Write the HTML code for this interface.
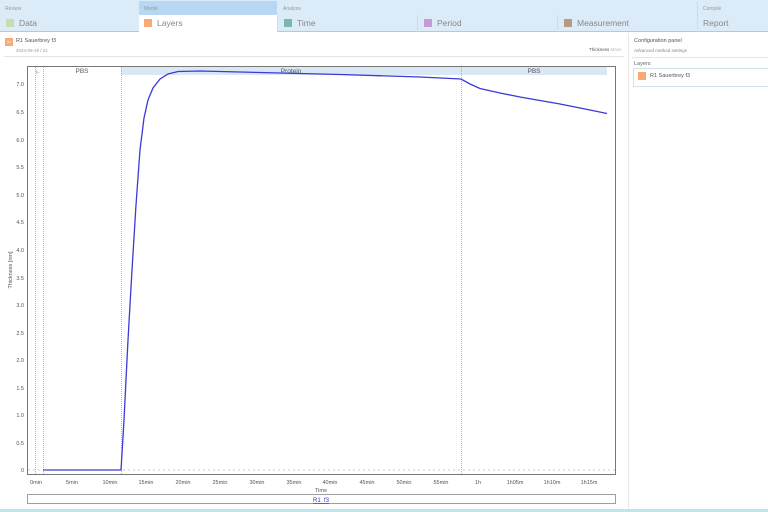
<!DOCTYPE html>
<html><head><meta charset="utf-8"><style>
*{margin:0;padding:0;box-sizing:border-box}
body{width:768px;height:512px;overflow:hidden;background:#fff;font-family:"Liberation Sans",sans-serif;position:relative;color:#444}
.a{position:absolute}
.sm{font-size:5px;color:#999}
.tab{font-size:8.5px;color:#888}
.sq{display:inline-block;width:8px;height:8px;vertical-align:-1px;margin-right:5px}
</style></head><body>
<div class="a" style="left:0;top:0;width:768px;height:32px;background:#dcebf8;border-bottom:1px solid #9fd3e0"></div>
<div class="a" style="left:139px;top:1px;width:138px;height:14px;background:#b7d7f3"></div>
<div class="a" style="left:139px;top:15px;width:138px;height:17px;background:#fff"></div>
<div class="a" style="left:277px;top:15px;width:1px;height:17px;background:#c9dcec"></div>
<div class="a" style="left:697px;top:1px;width:1px;height:31px;background:#c9dcec"></div>
<div class="a" style="left:417px;top:15px;width:1px;height:17px;background:#c9dcec"></div>
<div class="a" style="left:557px;top:15px;width:1px;height:17px;background:#c9dcec"></div>
<div class="a sm" style="left:5px;top:6px">Review</div>
<div class="a sm" style="left:144px;top:6px">Model</div>
<div class="a sm" style="left:283px;top:6px">Analyze</div>
<div class="a sm" style="left:703px;top:6px">Compile</div>
<div class="a tab" style="left:6px;top:18px"><span class="sq" style="background:#c8dcb0"></span>Data</div>
<div class="a tab" style="left:144px;top:18px"><span class="sq" style="background:#f8aa72"></span>Layers</div>
<div class="a tab" style="left:284px;top:18px"><span class="sq" style="background:#7ab8b0"></span>Time</div>
<div class="a tab" style="left:424px;top:18px"><span class="sq" style="background:#c49ad8"></span>Period</div>
<div class="a tab" style="left:564px;top:18px"><span class="sq" style="background:#b89a80"></span>Measurement</div>
<div class="a tab" style="left:703px;top:18px">Report</div>

<div class="a" style="left:5px;top:38px;width:8px;height:8px;background:#f8aa72;font-size:4px;color:#fff;text-align:center;line-height:8px">lu</div>
<div class="a" style="left:16px;top:38px;font-size:5.5px;color:#555">R1 Sauerbrey f3</div>
<div class="a sm" style="left:16px;top:48px;font-size:4.5px">2024-09-19 / 21</div>
<div class="a" style="left:589px;top:47px;font-size:4.5px;color:#555">Thickness <span style="color:#bbb">Mass</span></div>
<div class="a" style="left:4px;top:56px;width:620px;height:1px;background:#e5e5e5"></div>
<div class="a" style="left:628px;top:33px;width:1px;height:479px;background:#e8e8e8"></div>
<div class="a" style="left:634px;top:38px;font-size:5.5px;color:#555">Configuration panel</div>
<div class="a" style="left:634px;top:48px;font-size:4.5px;color:#888">Advanced method settings</div>
<div class="a" style="left:632px;top:57px;width:136px;height:1px;background:#e5e5e5"></div>
<div class="a" style="left:634px;top:61px;font-size:5.5px;color:#666">Layers</div>
<div class="a" style="left:633px;top:68px;width:135px;height:19px;border:1px solid #cfe3ea;border-right:none"></div>
<div class="a" style="left:638px;top:72px;width:8px;height:8px;background:#f8aa72"></div>
<div class="a" style="left:650px;top:73px;font-size:5.5px;color:#555">R1 Sauerbrey f3</div>

<svg class="a" style="left:0;top:0" width="768" height="512" font-family="Liberation Sans,sans-serif">
<rect x="121" y="67" width="340" height="8" fill="#dae8f5"/>
<rect x="461" y="67" width="146" height="8" fill="#dae8f5"/>
<rect x="27.5" y="66.5" width="588" height="408" fill="none" stroke="#777" stroke-width="1"/>
<g stroke="#999" stroke-width="0.7" stroke-dasharray="1,1">
<line x1="35.5" y1="67" x2="35.5" y2="474"/><line x1="43.5" y1="67" x2="43.5" y2="474"/>
<line x1="121.5" y1="67" x2="121.5" y2="474"/><line x1="461.5" y1="67" x2="461.5" y2="474"/>
<line x1="28" y1="470" x2="615" y2="470" stroke="#bbb" stroke-dasharray="2,3"/>
</g>
<g font-size="6.5" fill="#555" text-anchor="middle">
<text x="82" y="73">PBS</text><text x="291" y="73">Protein</text><text x="534" y="73">PBS</text>
<text x="38" y="73" font-size="4">1..</text>
</g>
<g font-size="5.5" fill="#555" text-anchor="end">
<text x="24" y="472">0</text><text x="24" y="445">0.5</text><text x="24" y="417">1.0</text><text x="24" y="390">1.5</text><text x="24" y="362">2.0</text><text x="24" y="335">2.5</text><text x="24" y="307">3.0</text><text x="24" y="280">3.5</text><text x="24" y="252">4.0</text><text x="24" y="224">4.5</text><text x="24" y="197">5.0</text><text x="24" y="169">5.5</text><text x="24" y="142">6.0</text><text x="24" y="114">6.5</text><text x="24" y="86">7.0</text>
</g>
<text x="12" y="270" font-size="5.5" fill="#555" text-anchor="middle" transform="rotate(-90 12 270)">Thickness [nm]</text>
<g font-size="5.5" fill="#555" text-anchor="middle">
<text x="36" y="484">0min</text><text x="72" y="484">5min</text><text x="110" y="484">10min</text><text x="146" y="484">15min</text><text x="183" y="484">20min</text><text x="220" y="484">25min</text><text x="257" y="484">30min</text><text x="294" y="484">35min</text><text x="330" y="484">40min</text><text x="367" y="484">45min</text><text x="404" y="484">50min</text><text x="441" y="484">55min</text><text x="478" y="484">1h</text><text x="515" y="484">1h05m</text><text x="552" y="484">1h10m</text><text x="589" y="484">1h15m</text>
<text x="321" y="492">Time</text>
</g>
<rect x="27.5" y="494.5" width="588" height="9" fill="none" stroke="#777" stroke-width="0.7"/>
<text x="321" y="502" font-size="6" fill="#3333cc" text-anchor="middle" text-decoration="underline">R1_f3</text>
<path d="M43 470 L121 470 L124 420 L128 340 L132 270 L136 205 L140 150 L144 118 L148 100 L153 88 L160 79 L168 74 L178 71.5 L200 71 L260 72.5 L340 74.5 L420 77 L461 79 L470 84 L480 88.5 L500 93 L520 97 L540 100.5 L560 104 L585 109 L607 113.5" fill="none" stroke="#3a3ad6" stroke-width="1.3"/>
</svg>
<div class="a" style="left:0;top:509px;width:768px;height:3px;background:#bfe4ee"></div>
</body></html>
